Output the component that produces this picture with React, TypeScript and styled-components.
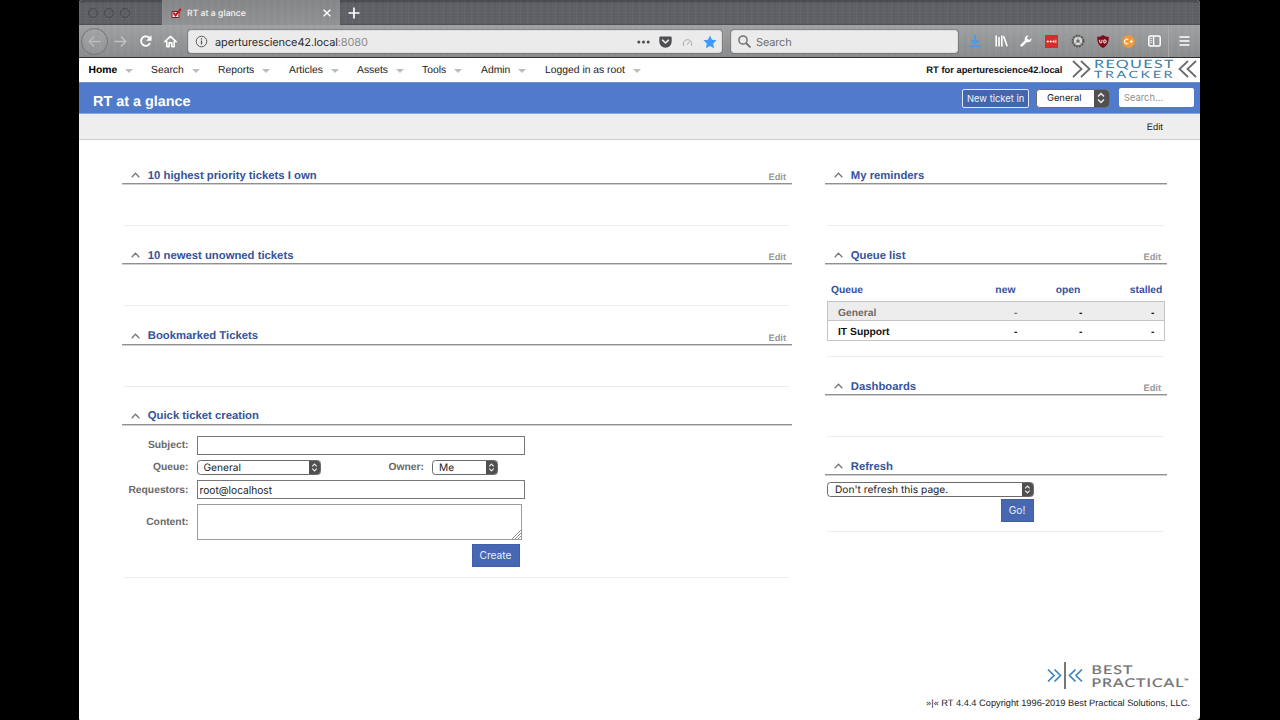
import React from "react";
import styled, { createGlobalStyle } from "styled-components";

const GlobalStyle = createGlobalStyle`
  * { box-sizing: border-box; }
  body { margin: 0; background: #000; overflow: hidden; font-family: "Liberation Sans", Arial, sans-serif; text-rendering: geometricPrecision; }
  input, textarea, button { font: inherit; margin: 0; outline: none; }
`;

const ui = `Inter, "Open Sans", sans-serif`;

const Screen = styled.div`
  height: 720px;
  padding: 0 79px;
  background: #000;
`;

const Window = styled.div`
  width: 1121.4px;
  height: 720px;
  display: flex;
  flex-direction: column;
  background: #fff;
  border-radius: 3px 3px 4px 1px;
  overflow: hidden;
`;

/* ---------- browser chrome ---------- */

const TabStrip = styled.div`
  flex: none;
  height: 25px;
  display: flex;
  background:
    linear-gradient(rgba(0, 0, 0, 0.28), transparent 4px),
    repeating-linear-gradient(90deg, rgba(255, 255, 255, 0.03) 0 1px, transparent 1px 3px, rgba(0, 0, 0, 0.03) 3px 4px, transparent 4px 7px),
    repeating-linear-gradient(rgba(255, 255, 255, 0.03) 0 1px, transparent 1px 3px),
    #5e5f64;
  border-bottom: 1px solid #505155;
`;

const Lights = styled.div`
  width: 83px;
  display: flex;
  gap: 6px;
  padding: 8px 0 0 9px;
`;

const Light = styled.span`
  width: 10px;
  height: 10px;
  border: 1px solid #48494c;
  border-radius: 50%;
`;

const Tab = styled.div`
  width: 178px;
  height: 25px;
  display: flex;
  align-items: center;
  padding: 1px 9px 0 9px;
  background:
    repeating-linear-gradient(90deg, rgba(255, 255, 255, 0.03) 0 1px, transparent 1px 4px, rgba(0, 0, 0, 0.02) 4px 5px, transparent 5px 7px),
    linear-gradient(#858689, #929394);
  color: #f4f4f4;
  font: 500 8.7px ${ui};
`;

const TabTitle = styled.span`
  flex: 1;
  margin: 1px 0 0 5px;
`;

const NewTab = styled.div`
  padding: 6px 0 0 8px;
`;

const Toolbar = styled.div`
  flex: none;
  height: 33px;
  display: flex;
  align-items: center;
  background:
    repeating-linear-gradient(90deg, rgba(255, 255, 255, 0.03) 0 1px, transparent 1px 4px, rgba(0, 0, 0, 0.02) 4px 5px, transparent 5px 7px),
    linear-gradient(#a0a1a2, #8b8c8d);
  border-bottom: 1px solid #2e2e2f;
  padding-left: 2px;
`;

const BackButton = styled.div`
  width: 27px;
  height: 27px;
  display: grid;
  place-items: center;
  border: 1px solid #737475;
  border-radius: 50%;
  background: rgba(255, 255, 255, 0.06);
`;

const NavIcons = styled.div`
  display: flex;
  align-items: center;
  gap: 12px;
  margin: 0 11px 0 6px;
`;

const Field = styled.div<{ $w: number; $gap?: number }>`
  width: ${(p) => p.$w}px;
  height: 23px;
  display: flex;
  align-items: center;
  margin-left: ${(p) => p.$gap ?? 0}px;
  padding: 1px 4px 0 6px;
  background: #ebebec;
  border: 1px solid #dcdcdd;
  border-radius: 3px;
  box-shadow: 0 0 0 1px rgba(80, 80, 80, 0.3);
  color: #6d6d70;
  font: 11px ${ui};
`;

const Address = styled.span`
  flex: 1;
  margin-left: 7px;
  color: #2c2c2e;
  letter-spacing: -0.14px;
  em { font-style: normal; color: #8a8a8c; }
`;

const FieldIcons = styled.span`
  display: flex;
  align-items: center;
  gap: 9px;
`;

const SearchHint = styled.span`
  margin-left: 5px;
  letter-spacing: -0.15px;
`;

const Extensions = styled.div`
  flex: 1;
  display: flex;
  align-items: center;
  justify-content: space-between;
  padding: 0 10px 0 10px;
`;

const ExtIcon = styled.span<{ $divider?: boolean }>`
  display: flex;
  ${(p) => p.$divider && "border-left: 1px solid #a9a9ab; padding: 10px 0 10px 10px; margin-left: -5px;"}
`;

/* ---------- RT header ---------- */

const Menu = styled.nav`
  flex: none;
  height: 24px;
  display: flex;
  align-items: center;
  padding: 0 3px 0 9.5px;
  font-size: 10.35px;
  color: #1b1b1b;
`;

const MenuItem = styled.div<{ $w: number; $bold?: boolean }>`
  width: ${(p) => p.$w}px;
  display: flex;
  align-items: center;
  white-space: nowrap;
  font-weight: ${(p) => (p.$bold ? 700 : 400)};
  color: ${(p) => (p.$bold ? "#000" : "#1b1b1b")};
`;

const Arrow = styled.i`
  margin: 2px 0 0 8px;
  border: 4px solid transparent;
  border-top-color: #bdbdbd;
  border-bottom: 0;
`;

const SiteName = styled.span`
  margin: 0 10px 0 auto;
  font-size: 9.35px;
  font-weight: 700;
  color: #111;
`;

const TitleBar = styled.header`
  flex: none;
  height: 32px;
  display: flex;
  align-items: center;
  padding: 0 6.5px 0 14px;
  background: #507bcb;
  border-top: 1px solid #7193d3;
  border-bottom: 1px solid #8ba7dc;
  color: #fff;
`;

const Title = styled.h1`
  margin: 7px auto 0 0;
  font-size: 14.4px;
  line-height: 18px;
`;

const NewTicket = styled.button`
  width: 67.5px;
  height: 19px;
  margin-right: 6.5px;
  padding: 0;
  border: 1px solid #dfe7f6;
  border-radius: 2px;
  background: #4466b0;
  color: #eef2fa;
  font: 9.4px ${ui};
  white-space: nowrap;
`;

const TopSearch = styled.input`
  width: 75px;
  height: 19px;
  margin: 0 0 1px 9px;
  padding: 0 5px;
  border: 0;
  border-radius: 2px;
  background: #fff;
  font: 9.4px ${ui};
  &::placeholder { color: #8e8e8e; opacity: 1; }
`;

const SubBar = styled.div`
  flex: none;
  height: 26px;
  display: flex;
  align-items: center;
  justify-content: flex-end;
  padding: 1px 37.5px 0 0;
  background: #eee;
  border-bottom: 1px solid #ccc;
  font-size: 9.3px;
  color: #222;
`;

/* ---------- dropdown ---------- */

const SelectBox = styled.div<{ $w: number; $h?: number; $cap?: number; $size?: number; $pad?: number }>`
  width: ${(p) => p.$w}px;
  height: ${(p) => p.$h ?? 15}px;
  display: flex;
  align-items: stretch;
  overflow: hidden;
  border: 1px solid #6b6b6b;
  border-radius: 3.5px;
  background: #fff;
  color: #1c1c1c;
  font: ${(p) => p.$size ?? 10.2}px / ${(p) => (p.$h ?? 15) - 1}px ${ui};
  span { flex: 1; padding-left: ${(p) => p.$pad ?? 6}px; white-space: nowrap; }
  b { width: ${(p) => p.$cap ?? 11}px; display: grid; place-items: center; background: #505050; }
`;

type SelectProps = { value: string; w: number; h?: number; cap?: number; size?: number; pad?: number };

const Select = ({ value, w, h, cap, size, pad }: SelectProps) => (
  <SelectBox $w={w} $h={h} $cap={cap} $size={size} $pad={pad}>
    <span>{value}</span>
    <b>
      <svg width={h ? 8 : 7} height={h ? 12 : 9} viewBox="0 0 8 12" fill="none" stroke="#efefef" strokeWidth="1.5">
        <path d="M1 4.5 4 1.5 7 4.5M1 7.5 4 10.5 7 7.5" />
      </svg>
    </b>
  </SelectBox>
);

/* ---------- dashboard ---------- */

const Main = styled.main`
  flex: 1;
  display: flex;
  align-items: flex-start;
  gap: 33px;
  padding: 24px 33px 0 43px;
`;

const Column = styled.div<{ $w: number }>`
  flex: none;
  width: ${(p) => p.$w}px;
  display: flex;
  flex-direction: column;
  gap: 18.25px;
`;

const Panel = styled.section<{ $h: number }>`
  height: ${(p) => p.$h}px;
  display: flex;
  flex-direction: column;
`;

const PanelHead = styled.div`
  flex: none;
  height: 20px;
  display: flex;
  align-items: center;
  padding: 0 6px 0 8.5px;
  border-bottom: 1px solid #919191;
  box-shadow: 0 1px 0 #d0d0d0;
  h2 { margin: 4px auto 0 8.3px; font-size: 11.3px; line-height: 16px; color: #35539b; }
  svg { margin-top: 3px; }
`;

const EditLink = styled.a`
  margin-top: 7px;
  font-size: 9.3px;
  font-weight: 700;
  color: #999;
`;

const PanelBody = styled.div`
  flex: 1;
  margin: 0 3px 0 2px;
  border-bottom: 1px solid #ededed;
`;

type PanelProps = { title: string; edit?: boolean; h?: number; children?: React.ReactNode };

const Widget = ({ title, edit, h = 62, children }: PanelProps) => (
  <Panel $h={h}>
    <PanelHead>
      <svg width="9" height="6" viewBox="0 0 9 6" fill="none" stroke="#777" strokeWidth="1.3">
        <path d="M.7 5.2 4.5 1.2 8.3 5.2" />
      </svg>
      <h2>{title}</h2>
      {edit && <EditLink>Edit</EditLink>}
    </PanelHead>
    <PanelBody>{children}</PanelBody>
  </Panel>
);

const Form = styled.div`
  display: grid;
  grid-template-columns: 64.5px 328px;
  grid-template-rows: 20px 15px 20px 36px 23px;
  row-gap: 4.7px;
  column-gap: 8px;
  align-items: center;
  padding-top: 10.3px;
`;

const Label = styled.label`
  justify-self: end;
  padding-top: 1.5px;
  font-size: 10.3px;
  font-weight: 700;
  color: #6a6a6a;
`;

const TextInput = styled.input`
  width: 328px;
  height: 19px;
  padding: 1px 2px 0;
  border: 1px solid #777;
  background: #fff;
  color: #222;
  font: 10.2px ${ui};
`;

const QueueRow = styled.div`
  display: flex;
  align-items: center;
  label { margin: 0 8px 0 auto; }
  & > :last-child { margin-right: 26.5px; }
`;

const ContentBox = styled.div`
  width: 325.5px;
  height: 36px;
  display: flex;
  align-items: flex-end;
  justify-content: flex-end;
  border: 1px solid #9c9c9c;
`;

const BlueButton = styled.button<{ $w: number; $right: number }>`
  width: ${(p) => p.$w}px;
  height: 23px;
  justify-self: end;
  margin: -1px ${(p) => p.$right}px 0 0;
  padding: 0 0 1px;
  border: 1px solid #3f5fae;
  background: #4767b3;
  color: #e8edf8;
  font: 10.2px ${ui};
`;

const ButtonSlot = styled.div`
  grid-column: 2;
  display: grid;
`;

const QueueTable = styled.div`
  width: 338.4px;
  padding: 16px 0 0 0;
  font-size: 10.3px;
  font-weight: 700;
`;

const QueueLine = styled.div<{ $kind: "head" | "odd" | "even" }>`
  height: ${(p) => (p.$kind === "even" ? 21 : 20)}px;
  display: grid;
  grid-template-columns: 1fr 60px 65px ${(p) => (p.$kind === "head" ? 82 : 72)}px;
  align-items: center;
  padding: ${(p) => (p.$kind === "head" ? "2px 2px 0 3px" : "5px 10px 0 10px")};
  border: 1px solid ${(p) => (p.$kind === "head" ? "transparent" : "#c4c4c4")};
  background: ${(p) => (p.$kind === "odd" ? "#ededed" : "transparent")};
  color: ${(p) => (p.$kind === "head" ? "#35539b" : p.$kind === "odd" ? "#6a6a6a" : "#111")};
  margin: ${(p) => (p.$kind === "even" ? "-1px 0 0" : p.$kind === "head" ? "0 0 1px" : "0")};
  line-height: 14px;
  span + span { text-align: right; }
  span:nth-child(n + 3) { color: ${(p) => (p.$kind === "head" ? "#35539b" : "#111")}; }
`;

const RefreshBody = styled.div`
  display: flex;
  flex-direction: column;
  gap: 3px;
  width: 207px;
  padding-top: 7px;
`;

const Footer = styled.footer`
  flex: none;
  display: flex;
  flex-direction: column;
  align-items: flex-end;
  padding: 0 10.5px 11px 0;
  font-size: 9.25px;
  line-height: 11px;
  color: #222;
`;

const FooterLogo = styled.svg`
  margin: 0 0 8px 0;
`;

const menu = [
  { label: "Home", w: 62.5, bold: true },
  { label: "Search", w: 67 },
  { label: "Reports", w: 71 },
  { label: "Articles", w: 68 },
  { label: "Assets", w: 65 },
  { label: "Tools", w: 59 },
  { label: "Admin", w: 64 },
  { label: "Logged in as root", w: 100 },
];

const RequestTrackerLogo = () => (
  <svg width="125" height="22" viewBox="0 0 125 22" fill="none" fontFamily="Lato, sans-serif">
    <g stroke="#6a6c70" strokeWidth="1.8">
      <path d="M1 2 9.500 10 1 18M9 2 17.500 10 9 18" />
      <path d="M116 2 107.500 10 116 18M124 2 115.500 10 124 18" />
    </g>
    <g fill="#3d7ea6">
      <text x="22" y="9" fontSize="11.500" textLength="81" lengthAdjust="spacingAndGlyphs" letterSpacing="1">REQUEST</text>
      <text x="22" y="18.800" fontSize="10" textLength="81" lengthAdjust="spacingAndGlyphs" letterSpacing="1.800">TRACKER</text>
    </g>
  </svg>
);

export default function App() {
  return (
    <Screen>
      <GlobalStyle />
      <Window>
        <TabStrip>
          <Lights><Light /><Light /><Light /></Lights>
          <Tab>
            <svg width="11" height="11" viewBox="0 0 11 11" fill="none">
              <path d="M1 3.500h7V9.500H1z" fill="#eee" stroke="#7a2024" />
              <path d="M2.300 4.700 4.500 7.500 9.800.9" stroke="#c4161c" strokeWidth="2" />
            </svg>
            <TabTitle>RT at a glance</TabTitle>
            <svg width="8" height="8" viewBox="0 0 8 8" stroke="#fff" strokeWidth="1.4"><path d="M.7.7l6.6 6.6M7.3.7.7 7.3" /></svg>
          </Tab>
          <NewTab>
            <svg width="12" height="12" viewBox="0 0 12 12" stroke="#fff" strokeWidth="1.7"><path d="M6 .5v11M.5 6h11" /></svg>
          </NewTab>
        </TabStrip>
        <Toolbar>
          <BackButton>
            <svg width="13" height="11" viewBox="0 0 13 11" fill="none" stroke="#bbbcbd" strokeWidth="1.4" strokeLinecap="round" strokeLinejoin="round"><path d="M12 5.5H1.2M5.6 1 1 5.5 5.6 10" /></svg>
          </BackButton>
          <NavIcons>
            <svg width="13" height="11" viewBox="0 0 13 11" fill="none" stroke="#c2c2c3" strokeWidth="1.4" strokeLinecap="round" strokeLinejoin="round"><path d="M1 5.5h10.8M7.4 1 12 5.5 7.4 10" /></svg>
            <svg width="13" height="12" viewBox="0 0 13 12" fill="none" stroke="#fff" strokeWidth="1.8"><path d="M11 8.200A4.700 4.700 0 1 1 9.600 2.300L11.500 4" /><path d="M12.500.3V5.700H7.100z" fill="#fff" stroke="none" /></svg>
            <svg width="13" height="13" viewBox="0 0 14 13" fill="none" stroke="#fff" strokeWidth="1.7" strokeLinejoin="round" strokeLinecap="round"><path d="M1 6.7 7 1l6 5.7M3 6.500V12h2.500V8h3v4H11V6.5" /></svg>
          </NavIcons>
          <Field $w={534}>
            <svg width="13" height="13" viewBox="0 0 13 13" fill="none" stroke="#59595b"><circle cx="6.5" cy="6.5" r="5.3" /><path d="M6.5 5.6v3.9M6.5 3.3v1.3" strokeWidth="1.3" /></svg>
            <Address>aperturescience42.local<em>:8080</em></Address>
            <FieldIcons>
              <svg width="13" height="4" viewBox="0 0 13 4" fill="#4d4d50"><circle cx="1.8" cy="2" r="1.5" /><circle cx="6.5" cy="2" r="1.5" /><circle cx="11.2" cy="2" r="1.5" /></svg>
              <svg width="13" height="12" viewBox="0 0 13 12" fill="none"><path d="M1.5.5h10a1.2 1.2 0 0 1 1.2 1.2V5.5a6.2 6.2 0 0 1-12.400 0V1.7A1.2 1.2 0 0 1 1.5.5z" fill="#4f4f53" /><path d="M3.6 4.2 6.5 7 9.4 4.2" stroke="#ebebec" strokeWidth="1.6" strokeLinecap="round" strokeLinejoin="round" /></svg>
              <svg width="13" height="10" viewBox="0 0 13 10" fill="none" stroke="#a9a9ab" strokeLinecap="round"><path d="M2.5 8.5a4.3 4.3 0 1 1 8 0M6.3 7.5 8.3 4.8" /></svg>
              <svg width="14" height="14" viewBox="0 0 14 14" fill="#3e9bf8"><path d="M7 .5 9 4.8l4.6.5-3.400 3.200.9 4.8L7 11l-4.1 2.3.9-4.800L.4 5.300 5 4.800z" /></svg>
            </FieldIcons>
          </Field>
          <Field $w={227} $gap={9}>
            <svg width="13" height="13" viewBox="0 0 13 13" fill="none" stroke="#747476" strokeWidth="1.5"><circle cx="5" cy="5" r="4.1" /><path d="m8 8 4.5 4.5" strokeWidth="1.8" /></svg>
            <SearchHint>Search</SearchHint>
          </Field>
          <Extensions>
            <ExtIcon><svg width="14" height="14" viewBox="0 0 14 14" fill="none" stroke="#4a9aec" strokeWidth="1.8"><path d="M7 1v8M3.3 6 7 9.5 10.7 6M1.5 12.2h11" /></svg></ExtIcon>
            <ExtIcon><svg width="13" height="12" viewBox="0 0 13 12" stroke="#fff" strokeWidth="1.6"><path d="M1.2.5v11M4 2v9.5M6.8.5v11M8.6 1.2l3.6 10" /></svg></ExtIcon>
            <ExtIcon><svg width="12" height="12" viewBox="0 0 24 24" fill="#fff"><path d="M23 6.500 19 9.500l-4-1L14 4.800 17.500 1A7 7 0 0 0 10 10.500L1.500 19a2.400 2.400 0 0 0 3.600 3.600L13.500 14A7 7 0 0 0 23 6.500z" /></svg></ExtIcon>
            <ExtIcon><svg width="13" height="13" viewBox="0 0 13 13"><path d="M0 0h13v13H0z" fill="#d52d2c" /><g fill="#fff"><circle cx="2.800" cy="6.500" r="1.100" /><circle cx="5.700" cy="6.500" r="1.100" /><circle cx="8.600" cy="6.500" r="1.100" /><path d="M10.400 4.800h.9v3.400h-.9z" /></g></svg></ExtIcon>
            <ExtIcon><svg width="14" height="14" viewBox="0 0 14 14" fill="none"><circle cx="7" cy="7" r="5.500" stroke="#4b4b4b" strokeWidth="1.800" strokeDasharray="1.700 1.180" /><circle cx="7" cy="7" r="4.700" fill="#d7d7d7" stroke="#555" strokeWidth=".7" /><circle cx="7" cy="7" r="1.300" fill="#777" stroke="#555" strokeWidth=".6" /><path d="M7 3v2.500M4 9.500l2-1.500M8 8l2 1.500" stroke="#999" strokeWidth=".8" /></svg></ExtIcon>
            <ExtIcon><svg width="12" height="13" viewBox="0 0 12 13"><path d="M6 0c1.500 1.300 3.500 1.800 5.700 1.800C12 7.500 10 11 6 13 2 11 0 7.500.3 1.800 2.500 1.800 4.500 1.300 6 0z" fill="#7e0d18" /><path d="M2.700 4.800v2a1.100 1.100 0 0 0 2.200 0v-2M6.900 4.900h.8a1.500 1.500 0 0 1 0 3h-.8z" fill="none" stroke="#fff" /></svg></ExtIcon>
            <ExtIcon><svg width="13" height="13" viewBox="0 0 13 13" fill="none"><circle cx="6.500" cy="6.500" r="6.400" fill="#eb9a3c" /><path d="M6.300 4.900a2.200 2.200 0 1 0 0 3.200M7.600 6.500h3.400M9.300 4.800v3.400" stroke="#fff5e5" strokeWidth="1.200" /></svg></ExtIcon>
            <ExtIcon><svg width="13" height="12" viewBox="0 0 13 12" fill="none" stroke="#fff"><rect x=".8" y="1" width="11.400" height="10" rx="1.500" strokeWidth="1.500" /><path d="M5.700 1v10" strokeWidth="1.300" /><path d="M2.300 3.500h2M2.300 5.500h2M2.300 7.500h2" strokeWidth=".8" /></svg></ExtIcon>
            <ExtIcon $divider><svg width="11" height="12" viewBox="0 0 11 12" stroke="#fff" strokeWidth="1.600"><path d="M.5 2h10M.5 6h10M.5 10h10" /></svg></ExtIcon>
          </Extensions>
        </Toolbar>

        <Menu>
          {menu.map((m) => (
            <MenuItem key={m.label} $w={m.w} $bold={m.bold}>{m.label}<Arrow /></MenuItem>
          ))}
          <SiteName>RT for aperturescience42.local</SiteName>
          <RequestTrackerLogo />
        </Menu>
        <TitleBar>
          <Title>RT at a glance</Title>
          <NewTicket>New ticket in</NewTicket>
          <Select value="General" w={74} h={19} cap={15} size={9.4} pad={10} />
          <TopSearch placeholder="Search..." />
        </TitleBar>
        <SubBar>Edit</SubBar>

        <Main>
          <Column $w={670}>
            <Widget title="10 highest priority tickets I own" edit />
            <Widget title="10 newest unowned tickets" edit />
            <Widget title="Bookmarked Tickets" edit />
            <Widget title="Quick ticket creation" h={173}>
              <Form>
                <Label>Subject:</Label>
                <TextInput />
                <Label>Queue:</Label>
                <QueueRow>
                  <Select value="General" w={124} />
                  <Label>Owner:</Label>
                  <Select value="Me" w={66} />
                </QueueRow>
                <Label>Requestors:</Label>
                <TextInput defaultValue="root@localhost" />
                <Label>Content:</Label>
                <ContentBox>
                  <svg width="10" height="10" viewBox="0 0 10 10" stroke="#888" strokeWidth=".9"><path d="M1 10 10 1M4 10l6-6M7 10l3-3" /></svg>
                </ContentBox>
                <ButtonSlot><BlueButton $w={48} $right={5}>Create</BlueButton></ButtonSlot>
              </Form>
            </Widget>
          </Column>
          <Column $w={342}>
            <Widget title="My reminders" />
            <Widget title="Queue list" edit h={112.5}>
              <QueueTable>
                <QueueLine $kind="head"><span>Queue</span><span>new</span><span>open</span><span>stalled</span></QueueLine>
                <QueueLine $kind="odd"><span>General</span><span>-</span><span>-</span><span>-</span></QueueLine>
                <QueueLine $kind="even"><span>IT Support</span><span>-</span><span>-</span><span>-</span></QueueLine>
              </QueueTable>
            </Widget>
            <Widget title="Dashboards" edit />
            <Widget title="Refresh" h={76.5}>
              <RefreshBody>
                <Select value="Don't refresh this page." w={207} pad={7} />
                <ButtonSlot><BlueButton $w={33} $right={0.5}>Go!</BlueButton></ButtonSlot>
              </RefreshBody>
            </Widget>
          </Column>
        </Main>

        <Footer>
          <FooterLogo width="143" height="29" viewBox="0 0 143 29" fill="none" fontFamily="Lato, sans-serif">
            <path d="M1 8.500 7 14.500 1 20.500M7.500 8.500l6 6-6 6M28.500 8.500l-6 6 6 6M35 8.500l-6 6 6 6" stroke="#3d82bd" strokeWidth="1.700" />
            <path d="M18 1v27" stroke="#77787b" strokeWidth="2" />
            <g fill="#707174" stroke="#707174" strokeWidth=".2" fontSize="12" letterSpacing=".8">
              <text x="44.500" y="13" textLength="42" lengthAdjust="spacingAndGlyphs">BEST</text>
              <text x="44.500" y="26" textLength="93" lengthAdjust="spacingAndGlyphs">PRACTICAL</text>
              <text x="137" y="21.500" fontSize="6" letterSpacing="0">™</text>
            </g>
          </FooterLogo>
          <span>»|« RT 4.4.4 Copyright 1996-2019 Best Practical Solutions, LLC.</span>
        </Footer>
      </Window>
    </Screen>
  );
}
